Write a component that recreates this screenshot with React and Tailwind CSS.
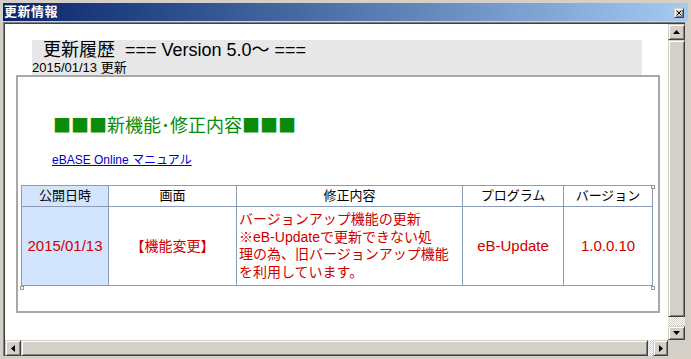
import React from 'react';

const raised =
  'bg-[#d4d0c8] border border-t-[#d4d0c8] border-l-[#d4d0c8] border-r-[#404040] border-b-[#404040] shadow-[inset_1px_1px_0_#ffffff,inset_-1px_-1px_0_#808080]';
const dither =
  'bg-[repeating-conic-gradient(#d4d0c8_0_25%,#ffffff_0_50%)] bg-[length:2px_2px]';

function Arrow({ dir }) {
  // tiny black triangles used by the scrollbar buttons
  const pts = {
    up: '0,4 3.5,0 7,4',
    down: '0,0 3.5,4 7,0',
    left: '4,0 0,3.5 4,7',
    right: '0,0 4,3.5 0,7',
  }[dir];
  const vertical = dir === 'up' || dir === 'down';
  return (
    <svg width={vertical ? 7 : 4} height={vertical ? 4 : 7} viewBox={vertical ? '0 0 7 4' : '0 0 4 7'}>
      <polygon points={pts} fill="#000" />
    </svg>
  );
}

function ScrollButton({ dir, className = '' }) {
  return (
    <div className={`${raised} flex items-center justify-center ${className}`}>
      <Arrow dir={dir} />
    </div>
  );
}

function Handle({ className }) {
  return <span className={`absolute w-[4px] h-[4px] bg-white border border-[#9a9a9a] ${className}`}></span>;
}

export default function App() {
  return (
    <div className="w-[691px] h-[359px] bg-[#d4d0c8] pt-[3px] pl-[3px] pr-[6px] pb-[3px] flex flex-col font-['Liberation_Sans','Noto_Sans_CJK_JP',sans-serif] overflow-hidden">
      {/* title bar */}
      <div className="h-[18px] -mr-[3px] flex items-center justify-between bg-gradient-to-r from-[#0a246a] to-[#a6caf0] pl-[1px] pr-[4px]">
        <span className="text-white font-bold text-[13px] leading-[18px] tracking-[0.5px]">更新情報</span>
        <div className={`${raised} w-[10px] h-[10px] flex items-center justify-center mt-[1px]`}>
          <svg width="6" height="6" viewBox="0 0 6 6">
            <path d="M0.5 0.5 L5.5 5.5 M5.5 0.5 L0.5 5.5" stroke="#000" strokeWidth="1" />
          </svg>
        </div>
      </div>

      <div className="mt-[1px] flex-1 border-t border-l border-[#808080]">
        <div className="w-full h-full border-t border-l border-[#404040] grid grid-cols-[663px_17px] grid-rows-[316px_16px]">
          {/* page */}
          <div className="bg-white overflow-hidden pt-[16px] pl-[11px]">
            <div className="ml-[16px] w-[610px] h-[35px] bg-[#e8e8e8]">
              <div className="pl-[11px] text-[18px] leading-[20px] text-black whitespace-nowrap">
                更新履歴&nbsp;&nbsp;=== Version 5.0～ ===
              </div>
              <div className="text-[13px] leading-[15px] text-black">2015/01/13 更新</div>
            </div>

            <div className="w-[644px] h-[238px] border-2 border-[#a8a8a8] pl-[3px]">
              <div className="pl-[32px] mt-[35px] text-[18px] leading-[24px] text-[#0a8c0a] whitespace-nowrap font-['Noto_Sans_CJK_JP',sans-serif]">
                ■■■新機能･修正内容■■■
              </div>
              <div className="pl-[31px] mt-[16px] text-[12px] leading-[16px]">
                <a href="#" className="text-[#0000cc] underline">eBASE Online マニュアル</a>
              </div>

              <div className="relative mt-[17px] w-[631px]">
                <table className="w-[631px] table-fixed border-collapse text-center">
                  <colgroup>
                    <col className="w-[87px]" />
                    <col className="w-[128px]" />
                    <col className="w-[226px]" />
                    <col className="w-[101px]" />
                    <col className="w-[89px]" />
                  </colgroup>
                  <thead>
                    <tr className="h-[21px] text-[13px] leading-[16px] text-black">
                      <th className="font-normal border border-[#8c9bb8] bg-[#d3e5fc] p-0">公開日時</th>
                      <th className="font-normal border border-[#8c9bb8] p-0">画面</th>
                      <th className="font-normal border border-[#8c9bb8] p-0">修正内容</th>
                      <th className="font-normal border border-[#8c9bb8] p-0">プログラム</th>
                      <th className="font-normal border border-[#8c9bb8] p-0">バージョン</th>
                    </tr>
                  </thead>
                  <tbody>
                    <tr className="h-[79px] text-[#cc0000]">
                      <td className="border border-[#8c9bb8] bg-[#d3e5fc] text-[15px] p-0">2015/01/13</td>
                      <td className="border border-[#8c9bb8] text-[14px] p-0">【機能変更】</td>
                      <td className="border border-[#8c9bb8] text-[14px] leading-[17.5px] text-left pl-[2px] pr-0 whitespace-nowrap">
                        バージョンアップ機能の更新<br />
                        ※eB-Updateで更新できない処<br />
                        理の為、旧バージョンアップ機能<br />
                        を利用しています。
                      </td>
                      <td className="border border-[#8c9bb8] text-[15px] p-0">eB-Update</td>
                      <td className="border border-[#8c9bb8] text-[15px] p-0">1.0.0.10</td>
                    </tr>
                  </tbody>
                </table>
                <Handle className="-top-[0px] -right-[3px]" />
                <Handle className="-bottom-[4px] -right-[3px]" />
                <Handle className="-bottom-[4px] -left-[1px]" />
              </div>
            </div>
          </div>

          {/* vertical scrollbar */}
          <div className="flex flex-col bg-[#d4d0c8]">
            <ScrollButton dir="up" className="h-[16px]" />
            <div className={`${raised} flex-1`}></div>
            <div className={`${dither} h-[9px]`}></div>
            <ScrollButton dir="down" className="h-[14px]" />
          </div>

          {/* horizontal scrollbar */}
          <div className="flex bg-[#d4d0c8]">
            <ScrollButton dir="left" className="w-[16px]" />
            <div className={`${raised} flex-1`}></div>
            <div className={`${dither} w-[5px]`}></div>
            <ScrollButton dir="right" className="w-[15px]" />
          </div>
          <div className="bg-[#d4d0c8]"></div>
        </div>
      </div>
    </div>
  );
}
